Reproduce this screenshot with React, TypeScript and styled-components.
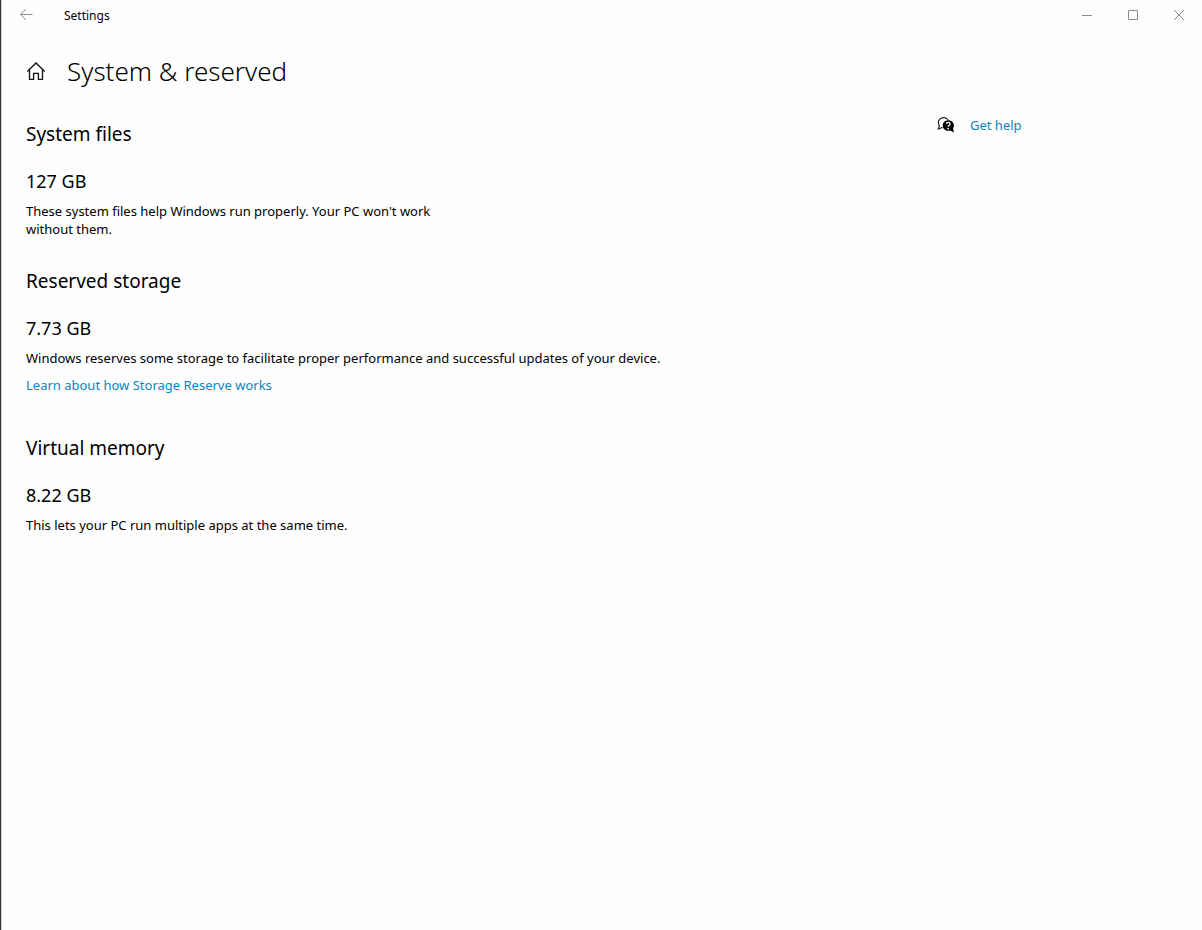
import React from "react";
import styled, { createGlobalStyle } from "styled-components";

const GlobalStyle = createGlobalStyle`
  *, *::before, *::after { box-sizing: border-box; }
  body {
    margin: 0;
    background: #fefefe;
    color: #000;
    font-family: "Segoe UI", "Noto Sans", "Open Sans", sans-serif;
    font-size: 13px;
    line-height: 18px;
  }
  h1, h2, p { margin: 0; font-weight: 400; }
`;

const Window = styled.div`
  display: flex;
  flex-direction: column;
  min-height: 100vh;
  border-left: 1px solid #3c3c44;
  box-shadow: inset 1px 0 0 #c9c9cc;
`;

const TitleBar = styled.header`
  display: flex;
  align-items: center;
  height: 30px;
`;

const AppName = styled.span`
  flex: 1;
  padding: 1px 0 0 13px;
  font-size: 12px;
`;

const BarButton = styled.button<{ $wide?: boolean }>`
  display: flex;
  align-items: center;
  justify-content: center;
  width: ${(p) => (p.$wide ? 50 : 46)}px;
  height: 30px;
  padding: 0;
  border: 0;
  background: transparent;
  color: #8c8c8c;
`;

const PageHeader = styled.div`
  display: flex;
  align-items: center;
  gap: 20px;
  padding: 21px 24px 0;
`;

const HomeButton = styled.button`
  display: flex;
  width: 22px;
  height: 22px;
  padding: 0;
  border: 0;
  background: transparent;
  color: #111;
`;

const PageTitle = styled.h1`
  font-size: 26px;
  line-height: 40px;
  && { font-weight: 300; }
`;

const Content = styled.div`
  display: grid;
  grid-template-columns: minmax(0, 1fr) 265px;
  padding: 25px 0 24px 25px;
`;

const Sections = styled.main`
  display: flex;
  flex-direction: column;
  gap: 29px;
  padding-top: 4px;
`;

const Section = styled.section<{ $spaced?: boolean }>`
  padding-bottom: ${(p) => (p.$spaced ? 11 : 0)}px;
`;

const SectionTitle = styled.h2`
  margin-bottom: 19px;
  font-size: 19px;
  line-height: 28px;
`;

const Amount = styled.p`
  margin-bottom: 7px;
  font-size: 18px;
  line-height: 28px;
`;

const Description = styled.p<{ $narrow?: boolean }>`
  max-width: ${(p) => (p.$narrow ? "430px" : "none")};
`;

const Link = styled.a`
  color: #0a84c1;
  text-decoration: none;
`;

const LinkLine = styled.p`
  margin-top: 9px;
`;

const Help = styled.aside`
  display: flex;
  align-items: flex-start;
`;

const HelpLink = styled(Link)`
  display: flex;
  align-items: center;
  gap: 15px;
`;

const BackIcon = () => (
  <svg width="14" height="14" viewBox="0 0 14 14" fill="none" stroke="currentColor" aria-hidden="true">
    <path d="M13.5 6.5H2M7 1L1.5 6.5L7 12" />
  </svg>
);

const HomeIcon = () => (
  <svg width="22" height="22" viewBox="0 0 22 22" fill="none" stroke="currentColor" strokeWidth="1.3" aria-hidden="true">
    <path d="M2.3 11.5L11 3L19.7 11.5M4.5 9.8V19.4H8.6V13.4H13.4V19.4H17.5V9.8" />
  </svg>
);

const HelpIcon = () => (
  <svg width="18" height="18" viewBox="0 0 18 18" aria-hidden="true">
    <path
      d="M6.6 1.6C3.6 1.6 1.3 3.8 1.3 6.6C1.3 7.8 1.7 8.9 2.4 9.8L1.4 13L4.8 11.6C5.4 11.8 6 11.9 6.6 11.9C9.6 11.9 12 9.5 12 6.7C12 3.8 9.6 1.6 6.6 1.6Z"
      fill="none"
      stroke="#111"
      strokeWidth="1.1"
    />
    <path
      d="M11.3 4.3C8.2 4.3 5.8 6.5 5.8 9.5C5.8 12.6 8.2 14.8 11.3 14.8C12 14.8 12.7 14.7 13.3 14.4L16.9 16.6L16.1 12.6C16.6 11.6 16.9 10.6 16.9 9.5C16.9 6.5 14.4 4.3 11.3 4.3Z"
      fill="#000"
      stroke="#fefefe"
      strokeWidth="1.2"
      paintOrder="stroke"
    />
    <path d="M9.4 8.1C9.4 7 10.2 6.4 11.2 6.4C12.3 6.4 13 7.1 13 7.9C13 9.3 11.2 9.3 11.2 10.8" fill="none" stroke="#fff" strokeWidth="1.3" />
    <circle cx="11.2" cy="12.6" r="0.9" fill="#fff" />
  </svg>
);

const MinimizeIcon = () => (
  <svg width="12" height="12" viewBox="0 0 12 12" stroke="currentColor" aria-hidden="true">
    <path d="M1 6.5H11" />
  </svg>
);

const MaximizeIcon = () => (
  <svg width="12" height="12" viewBox="0 0 12 12" fill="none" stroke="currentColor" aria-hidden="true">
    <path d="M1.5 1.5H10.5V10.5H1.5Z" />
  </svg>
);

const CloseIcon = () => (
  <svg width="12" height="12" viewBox="0 0 12 12" stroke="currentColor" aria-hidden="true">
    <path d="M1 1L11 11M11 1L1 11" />
  </svg>
);

export default function App() {
  return (
    <>
      <GlobalStyle />
      <Window>
        <TitleBar>
          <BarButton $wide aria-label="Back"><BackIcon /></BarButton>
          <AppName>Settings</AppName>
          <BarButton aria-label="Minimize"><MinimizeIcon /></BarButton>
          <BarButton aria-label="Maximize"><MaximizeIcon /></BarButton>
          <BarButton aria-label="Close"><CloseIcon /></BarButton>
        </TitleBar>
        <PageHeader>
          <HomeButton aria-label="Home"><HomeIcon /></HomeButton>
          <PageTitle>System &amp; reserved</PageTitle>
        </PageHeader>
        <Content>
          <Sections>
            <Section>
              <SectionTitle>System files</SectionTitle>
              <Amount>127 GB</Amount>
              <Description $narrow>
                These system files help Windows run properly. Your PC won't work without them.
              </Description>
            </Section>
            <Section $spaced>
              <SectionTitle>Reserved storage</SectionTitle>
              <Amount>7.73 GB</Amount>
              <Description>
                Windows reserves some storage to facilitate proper performance and successful updates of your device.
              </Description>
              <LinkLine>
                <Link href="#storage-reserve">Learn about how Storage Reserve works</Link>
              </LinkLine>
            </Section>
            <Section>
              <SectionTitle>Virtual memory</SectionTitle>
              <Amount>8.22 GB</Amount>
              <Description>This lets your PC run multiple apps at the same time.</Description>
            </Section>
          </Sections>
          <Help>
            <HelpLink href="#help"><HelpIcon />Get help</HelpLink>
          </Help>
        </Content>
      </Window>
    </>
  );
}
